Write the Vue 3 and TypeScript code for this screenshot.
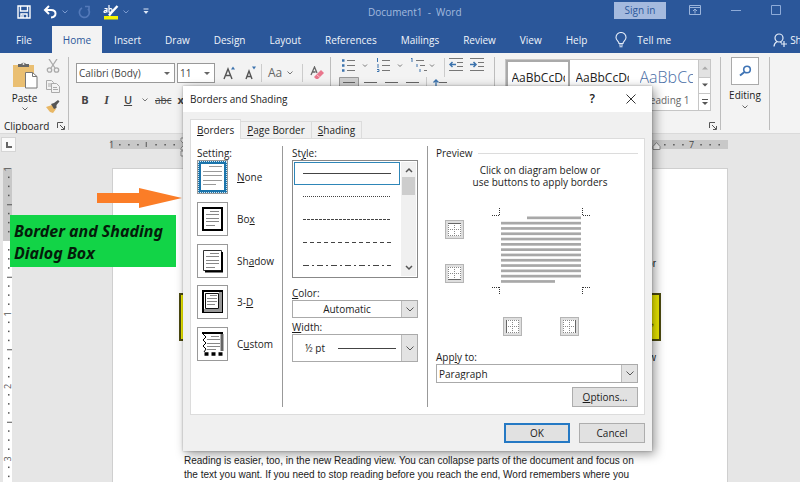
<script setup lang="ts">
import { ref } from 'vue'

interface Choice {
  id: string
  before: string
  key: string
  after: string
}

const menuTabs: string[] = ['File', 'Home', 'Insert', 'Draw', 'Design', 'Layout', 'References', 'Mailings', 'Review', 'View', 'Help']
const activeMenu = ref('Home')

const dialogTabs: Choice[] = [
  { id: 'borders', before: '', key: 'B', after: 'orders' },
  { id: 'page', before: '', key: 'P', after: 'age Border' },
  { id: 'shading', before: '', key: 'S', after: 'hading' },
]
const activeTab = ref('borders')

const settings: Choice[] = [
  { id: 'none', before: '', key: 'N', after: 'one' },
  { id: 'box', before: 'Bo', key: 'x', after: '' },
  { id: 'shadow', before: 'Sh', key: 'a', after: 'dow' },
  { id: 'threed', before: '3-', key: 'D', after: '' },
  { id: 'custom', before: 'C', key: 'u', after: 'stom' },
]
const setting = ref('none')

const lineStyles: { id: string; dash: string }[] = [
  { id: 'Solid', dash: 'none' },
  { id: 'Dotted', dash: '1 1' },
  { id: 'Short dash', dash: '3 1' },
  { id: 'Dash', dash: '4 3' },
  { id: 'Dash dot', dash: '6 3 2 3' },
]
const lineStyle = ref('Solid')

const previewLines: { x: number; y: number; w: number }[] = Array.from({ length: 13 }, (_, i) => ({
  x: i === 0 ? 36 : 10,
  y: 9.5 + i * 5.3,
  w: i === 0 ? 54 : i === 12 ? 54 : 80,
}))

const inch = 72.5
const eighths = (from: number, to: number) => {
  const marks: { n: number; pos: number; half: boolean; whole: boolean }[] = []
  for (let n = from; n <= to; n++) {
    marks.push({ n, pos: (n * inch) / 8, half: Math.abs(n % 8) === 4, whole: n % 8 === 0 })
  }
  return marks
}
const verticalMarks = eighths(-8, 28)
const leftMarks = eighths(0, 7)
const rightMarks = eighths(1, 7)
</script>

<template>
  <div class="word">
    <header class="titlebar">
      <div class="quick">
        <button aria-label="Save" class="q-save">
          <svg width="14" height="14" viewBox="0 0 14 14" fill="none" stroke="#fff" stroke-width="1.4"><path d="M1 1h12v12H1zM3.500 1v5h7V1M4 13V9h6v4M6 10v3" /></svg>
        </button>
        <button aria-label="Undo" class="q-undo">
          <svg width="15" height="14" viewBox="0 0 15 14" fill="none" stroke="#fff" stroke-width="2"><path d="M6 1L2 5l4 4M2 5h6c6 0 6 7 0 7.500" /></svg>
        </button>
        <button aria-label="Undo list" class="q-caret"><svg width="6" height="4" viewBox="0 0 6 4"><path d="M.5.5L3 3 5.500.5" fill="none" stroke="#7c9bd0" /></svg></button>
        <button aria-label="Redo" class="q-redo">
          <svg width="13" height="14" viewBox="0 0 13 14" fill="none" stroke="#5379b9" stroke-width="1.7"><path d="M4 3a5 5 0 1 0 6 1M7 1.500h4v4" /></svg>
        </button>
        <button aria-label="Text highlight" class="q-high">
          <svg width="16" height="16" viewBox="0 0 16 16"><rect x="1" y="12" width="14" height="3.500" fill="#f4f400" /><path d="M1.500 4.500h2.500v4M4 6.500C1 6 0 8.500 2 8.500c1 0 2-1 2-2M6 1v7.500M6 5.500c1-1.500 3.500-1 3 1-.3 2-2.500 2.500-3 1" stroke="#fff" stroke-width="1.200" fill="none" /><path d="M14.500 2L8 9l-2 2.500" stroke="#fff" stroke-width="2.400" fill="none" /></svg>
        </button>
        <button aria-label="Highlight colours" class="q-caret"><svg width="6" height="4" viewBox="0 0 6 4"><path d="M.5.5L3 3 5.500.5" fill="none" stroke="#7c9bd0" /></svg></button>
        <button aria-label="Customize toolbar" class="q-more"><svg width="6" height="7" viewBox="0 0 6 7"><path d="M.5 1h5" stroke="#dfe8f6" /><path d="M.5 3h5L3 6z" fill="#dfe8f6" /></svg></button>
      </div>
      <div class="doc-title">Document1&nbsp; -&nbsp; Word</div>
      <div class="window-tools">
        <button class="signin">Sign in</button>
        <button aria-label="Ribbon options"><svg width="12" height="10" viewBox="0 0 12 10" fill="none" stroke="#9cb5dc"><path d="M.5.5h11v9H.5zM.5 2.500h11M6 8.500v-4M4 6l2-2 2 2" /></svg></button>
        <button aria-label="Minimize"><svg width="10" height="10" viewBox="0 0 10 10"><path d="M0 5.500h10" stroke="#8eabd8" /></svg></button>
        <button aria-label="Maximize"><svg width="10" height="10" viewBox="0 0 10 10"><path d="M.5.5h9v9h-9z" fill="none" stroke="#8eabd8" /></svg></button>
      </div>
    </header>

    <nav class="menubar">
      <button v-for="tab in menuTabs" :key="tab" class="menu" :class="{ active: tab === activeMenu }" @click="activeMenu = tab">{{ tab }}</button>
      <button class="tell">
        <svg width="12" height="16" viewBox="0 0 12 16" fill="none" stroke="#e4ecf8" stroke-width="1.100"><path d="M4 11.500C4 9 1 8.500 1 5.500a5 5 0 0 1 10 0C11 8.500 8 9 8 11.500zM4 13h4M4.500 14.800h3" /></svg>
        Tell me
      </button>
      <button class="share">
        <svg width="14" height="14" viewBox="0 0 14 14" fill="none" stroke="#e4ecf8" stroke-width="1.200"><circle cx="6" cy="5" r="4" /><path d="M1 13.500C1 11 2.500 9.500 4 8.500M7.500 9l1 1M11 8v6M8 11h6" /></svg>
        Share
      </button>
    </nav>

    <section class="ribbon">
      <div class="group clipboard">
        <div class="clip-body">
          <button class="paste">
            <svg width="26" height="28" viewBox="0 0 26 28"><path d="M1 4h21v22H1z" fill="#eabf72" /><path d="M6 6V3h3a3 3 0 0 1 5 0h3v3z" fill="#666" /><circle cx="11.500" cy="3" r="1" fill="#eee" /><path d="M13.500 11.500h7l4.500 4v11.500H13.500z" fill="#fff" stroke="#777" /><path d="M20.500 11.500v4H25" fill="none" stroke="#777" /></svg>
            <span>Paste</span>
            <svg width="6" height="4" viewBox="0 0 6 4"><path d="M.5.5L3 3 5.500.5" fill="none" stroke="#666" /></svg>
          </button>
          <div class="clip-tools">
            <button aria-label="Cut"><svg width="14" height="14" viewBox="0 0 14 14" fill="none" stroke="#aaa" stroke-width="1.300"><path d="M3 0l6 9M11 0L5 9" /><circle cx="3.500" cy="11" r="2.200" /><circle cx="10.500" cy="11" r="2.200" /></svg></button>
            <button aria-label="Copy"><svg width="14" height="13" viewBox="0 0 14 13" fill="#f3f3f3" stroke="#aaa"><path d="M.5.5h5l2 2v7h-7zM2 4h4M2 6h4" /><path d="M5.500 3.500h5l3 3v6h-8zM7 7.500h4M7 9.500h5" /></svg></button>
            <button aria-label="Format painter"><svg width="15" height="14" viewBox="0 0 15 14"><path d="M1 7l6-2 4 4-3 4-3-1z" fill="#e8b765" /><path d="M6 4l3-1 4-3 1.500 1.500-3 3.500v3L9 9z" fill="#555" /></svg></button>
          </div>
        </div>
        <div class="group-label">Clipboard<svg width="8" height="8" viewBox="0 0 8 8" fill="none" stroke="#555"><path d="M.5 6V.5H6M3 3l4 4M7.500 4v3.500H4" /></svg></div>
      </div>

      <div class="group font">
        <div class="font-row">
          <span class="combo name"><select aria-label="Font name"><option>Calibri (Body)</option></select><i></i></span>
          <span class="combo size"><select aria-label="Font size"><option>11</option></select><i></i></span>
          <button aria-label="Grow font" class="grow"><svg width="13" height="16" viewBox="0 0 13 16"><path d="M1 14L5 4l4 10M2.500 10.500h5" stroke="#555" stroke-width="1.400" fill="none" /><path d="M8 4.500l2-3 2 3z" fill="#3c73ad" /></svg></button>
          <button aria-label="Shrink font" class="shrink"><svg width="13" height="16" viewBox="0 0 13 16"><path d="M2 14l3-8 3 8M3 11.500h4" stroke="#555" stroke-width="1.400" fill="none" /><path d="M8 1.500h4l-2 3z" fill="#3c73ad" /></svg></button>
          <button class="case">Aa <svg width="6" height="4" viewBox="0 0 6 4"><path d="M.5.5L3 3 5.500.5" fill="none" stroke="#777" /></svg></button>
          <button aria-label="Clear formatting" class="clear"><svg width="15" height="15" viewBox="0 0 15 15"><path d="M1 9l3.500-8L7 7M2.500 6h3" stroke="#666" stroke-width="1.300" fill="none" /><path d="M4 11l7-7 3 3-6 6H6z" fill="#e9778d" /><path d="M6.500 8.500l3.500 3" stroke="#f8c5cd" /></svg></button>
        </div>
        <div class="format-row">
          <button class="b">B</button><button class="i">I</button><button class="u">U</button>
          <button aria-label="Underline styles"><svg width="6" height="4" viewBox="0 0 6 4"><path d="M.5.5L3 3 5.500.5" fill="none" stroke="#777" /></svg></button>
          <button class="s">abc</button><button class="x">x</button>
        </div>
      </div>

      <div class="group paragraph">
        <div class="para-row">
          <svg class="lists" width="94" height="15" viewBox="0 0 94 15" fill="none" stroke="#777">
            <path d="M6 2.500h8M6 7.500h8M6 12.500h8M41 2.500h8M41 7.500h8M41 12.500h8M75 2.500h8M79 7.500h5M83 12.500h3" />
            <path d="M1 2.500h2.500M1 7.500h2.500M1 12.500h2.500" stroke="#3c73ad" stroke-width="2.500" />
            <path d="M36.500 0v4M36 7h2M36 9h2M36 11.500h2v2h-2M70 1l1-1v4M76 6v3M79 11v3" stroke="#3c73ad" />
            <path d="M22 6.500l2 2 2-2M57 6.500l2 2 2-2M89 6.500l2 2 2-2" />
          </svg>
          <svg class="indents" width="36" height="13" viewBox="0 0 36 13" fill="none" stroke="#777">
            <path d="M0 .5h14M8 4.500h6M8 8.500h6M0 12.500h14M21 .5h14M29 4.500h6M29 8.500h6M21 12.500h14" />
            <path d="M7 6.500H1M3.500 4L1 6.500 3.500 9M21 6.500h6M24.500 4L27 6.500 24.500 9" stroke="#3c73ad" stroke-width="1.500" />
          </svg>
          <span class="divider"></span>
        </div>
        <div class="align-row">
          <svg width="110" height="20" viewBox="0 0 110 20" fill="none" stroke="#666">
            <path d="M.5.500h19v19H.5z" fill="#cfcfcf" stroke="#999" />
            <path d="M4 5.500h12M4 9.500h8M25 5.500h13M28 9.500h8M46 5.500h13M50 9.500h9M67 5.500h13M67 9.500h13M100 5.500h8M100 9.500h8" />
            <path d="M87.500 0v20" stroke="#ccc" />
            <path d="M97 10V3M94.500 5.500L97 3l2.500 2.500" stroke="#3c73ad" stroke-width="1.300" />
          </svg>
        </div>
      </div>

      <div class="group styles">
        <div class="gallery">
          <button class="sample selected"><span>AaBbCcDc</span></button>
          <button class="sample"><span>AaBbCcDc</span></button>
          <button class="sample heading"><span>AaBbCc</span><small>Heading 1</small></button>
          <div class="gallery-nav">
            <button aria-label="Previous styles" class="off"><svg width="6" height="4" viewBox="0 0 6 4"><path d="M0 3.500L3 .5l3 3z" fill="#aaa" /></svg></button>
            <button aria-label="Next styles"><svg width="6" height="4" viewBox="0 0 6 4"><path d="M0 .5h6l-3 3z" fill="#555" /></svg></button>
            <button aria-label="More styles"><svg width="6" height="7" viewBox="0 0 6 7"><path d="M0 .5h6" stroke="#555" /><path d="M0 3h6L3 6z" fill="#555" /></svg></button>
          </div>
        </div>
        <svg class="launcher" width="8" height="8" viewBox="0 0 8 8" fill="none" stroke="#555"><path d="M.5 6V.5H6M3 3l4 4M7.500 4v3.500H4" /></svg>
      </div>

      <div class="group editing">
        <button class="edit-button">
          <span class="lens"><svg width="13" height="12" viewBox="0 0 13 12" fill="none" stroke="#3f74b5" stroke-width="1.600"><circle cx="8" cy="4.500" r="3.300" /><path d="M5.500 7L1 10.500" stroke-width="2" /></svg></span>
          Editing
          <svg width="6" height="4" viewBox="0 0 6 4"><path d="M.5.5L3 3 5.500.5" fill="none" stroke="#666" /></svg>
        </button>
      </div>
    </section>

    <main class="workspace">
      <div class="ruler-row">
        <button aria-label="Tab stop" class="tabstop"><svg width="6" height="6" viewBox="0 0 6 6"><path d="M1 0v5h5" fill="none" stroke="#666" stroke-width="2" /></svg></button>
        <div class="ruler">
          <svg width="73" height="9" viewBox="0 0 73 9">
            <template v-for="m in leftMarks" :key="m.n">
              <text v-if="m.whole" x="-1" y="8" font-size="9" fill="#444">1</text>
              <path v-else-if="m.half" :d="`M${m.pos} 2v5`" stroke="#555" />
              <rect v-else :x="m.pos" y="4" width="1.500" height="1.500" fill="#555" />
            </template>
          </svg>
          <svg width="72" height="9" viewBox="0 0 72 9">
            <template v-for="m in rightMarks" :key="m.n">
              <text v-if="m.half" x="33" y="8" font-size="9" fill="#444">7</text>
              <rect v-else :x="m.pos - 1" y="4" width="1.500" height="1.500" fill="#555" />
            </template>
          </svg>
        </div>
        <svg class="indent-start" width="8" height="20" viewBox="0 0 8 20" fill="#f8f8f8" stroke="#888"><path d="M1 1h6v3L4 7 1 4zM4 8l3 3v2H1v-2zM1 14h6v5H1z" /></svg>
        <svg class="indent-end" width="9" height="8" viewBox="0 0 9 8" fill="#f8f8f8" stroke="#888"><path d="M4.500.5l3.500 4v3H1v-3z" /></svg>
      </div>
      <div class="canvas">
        <svg class="vruler" width="9" height="314" viewBox="0 -73 9 314">
          <rect x="0" y="-73" width="9" height="73" fill="#c8c8c8" /><rect x="0" y="0" width="9" height="314" fill="#fff" />
          <template v-for="m in verticalMarks" :key="m.n">
            <text v-if="m.whole && m.n !== 0" :transform="`translate(8 ${m.pos + 3}) rotate(-90)`" font-size="9" fill="#555">{{ Math.abs(m.n / 8) }}</text>
            <path v-else-if="m.half" :d="`M4 ${m.pos}h5`" stroke="#555" />
            <rect v-else-if="!m.whole" x="5" :y="m.pos - 1" width="1.500" height="1.500" fill="#555" />
          </template>
        </svg>
        <article class="page">
          <p class="tail first">or</p>
          <p class="tail marked">,</p>
          <p class="tail">w</p>
          <p class="reading">Reading is easier, too, in the new Reading view. You can collapse parts of the document and focus on<br />the text you want. If you need to stop reading before you reach the end, Word remembers where you</p>
        </article>
      </div>
    </main>

    <svg class="arrow" width="86" height="22" viewBox="0 0 86 22"><path d="M0 6h42V1l43 10-43 10v-5H0z" fill="#fb7d27" /></svg>
    <aside class="callout">Border and Shading<br />Dialog Box</aside>

    <section class="dialog" role="dialog" aria-labelledby="dialog-title">
      <header class="dialog-head">
        <h1 id="dialog-title">Borders and Shading</h1>
        <button aria-label="Help" class="help">?</button>
        <button aria-label="Close"><svg width="10" height="10" viewBox="0 0 10 10"><path d="M.5.5l9 9M9.500.5l-9 9" stroke="#333" fill="none" /></svg></button>
      </header>
      <div class="dialog-body">
        <div class="dtabs" role="tablist">
          <button v-for="t in dialogTabs" :key="t.id" role="tab" class="dtab" :class="{ active: t.id === activeTab }" :aria-selected="t.id === activeTab" @click="activeTab = t.id"><u>{{ t.key }}</u>{{ t.after }}</button>
        </div>
        <div class="panel">
          <div class="settings" role="radiogroup" aria-labelledby="setting-label">
            <div id="setting-label" class="label">Setting:</div>
            <div class="setting-list">
              <label v-for="s in settings" :key="s.id" class="setting">
                <input v-model="setting" type="radio" name="setting" :value="s.id" />
                <span class="thumb">
                  <svg width="31" height="34" viewBox="0 0 31 34" fill="none">
                    <g v-if="s.id === setting">
                      <rect x="2.500" y="2.500" width="26" height="29" stroke="#1b74ab" stroke-width="3" />
                      <path d="M1 1.500h29M1 32.500h29M1.500 2v30M29.500 2v30" stroke="#d5eaf6" stroke-dasharray="1 1" />
                    </g>
                    <rect v-if="s.id === 'box'" x="6" y="6" width="19" height="22" stroke="#000" stroke-width="2" />
                    <g v-if="s.id === 'shadow'"><path d="M6.500 6.500h18v20h-18z" stroke="#333" /><path d="M25 8v19.500H8" stroke="#000" stroke-width="2" /></g>
                    <g v-if="s.id === 'threed'"><path d="M5 5h21v23H5z" fill="#000" /><path d="M7 7h18v20H7z" fill="#999" /><path d="M7 7h15v17H7z" fill="#fff" /><path d="M8.500 8.500h13v15h-13z" stroke="#111" /></g>
                    <g v-if="s.id === 'custom'"><path d="M5 6h21" stroke="#000" stroke-width="2" /><path d="M25 7v17" stroke="#666" stroke-width="3" /><path d="M6 7l3 3-3 3 3 3-3 3 3 3-2 3" stroke="#000" /><path d="M7.500 27h4M14.500 27h4M21.500 27h4" stroke="#000" stroke-width="3.500" /></g>
                    <path v-if="s.id === 'none'" d="M12 6.500h13M6 11.500h19M6 15.500h19M6 20.500h19M6 24.500h13" stroke="#999" />
                    <path v-else-if="s.id === 'threed'" d="M13 10.500h7M10 13.500h10M10 16.500h10M10 19.500h8" stroke="#888" />
                    <path v-else-if="s.id === 'custom'" d="M14 9.500h8M10 12.500h13M10 16.500h13M10 19.500h13M10 22.500h9" stroke="#888" />
                    <path v-else d="M13 9.500h9M9 12.500h13M9 16.500h13M9 19.500h13M9 23.500h9" stroke="#888" />
                  </svg>
                </span>
                <span>{{ s.before }}<u>{{ s.key }}</u>{{ s.after }}</span>
              </label>
            </div>
          </div>

          <div class="line-options">
            <div id="style-label" class="label">St<u>y</u>le:</div>
            <div class="listbox">
              <ul role="listbox" aria-labelledby="style-label">
                <li v-for="l in lineStyles" :key="l.id" role="option" :aria-label="l.id" :aria-selected="l.id === lineStyle" :class="{ chosen: l.id === lineStyle }" @click="lineStyle = l.id">
                  <svg width="88" height="1" viewBox="0 0 88 1"><path d="M0 .5h88" stroke="#444" :stroke-dasharray="l.dash" /></svg>
                </li>
              </ul>
              <div class="scroll">
                <svg width="8" height="6" viewBox="0 0 8 6"><path d="M1 5l3-3 3 3" fill="none" stroke="#555" stroke-width="1.500" /></svg>
                <div class="scroll-thumb"></div>
                <svg class="down" width="8" height="6" viewBox="0 0 8 6"><path d="M1 1l3 3 3-3" fill="none" stroke="#555" stroke-width="1.500" /></svg>
              </div>
            </div>
            <label class="label" for="color"><u>C</u>olor:</label>
            <div class="picker color">
              <select id="color"><option>Automatic</option></select>
              <span class="drop"><svg width="8" height="5" viewBox="0 0 8 5"><path d="M.5.5L4 4 7.500.5" fill="none" stroke="#555" /></svg></span>
            </div>
            <label class="label" for="width"><u>W</u>idth:</label>
            <div class="picker width">
              <select id="width"><option>½ pt</option></select>
              <span class="weight"></span>
              <span class="drop"><svg width="8" height="5" viewBox="0 0 8 5"><path d="M.5.5L4 4 7.500.5" fill="none" stroke="#555" /></svg></span>
            </div>
          </div>

          <div class="preview">
            <div class="preview-head">Preview</div>
            <p>Click on diagram below or<br />use buttons to apply borders</p>
            <div class="diagram">
              <div class="side">
                <button aria-label="Top border"><svg width="13" height="13" viewBox="0 0 13 13"><path d="M0 0h13v13H0z" fill="#fff" /><path d="M.5 0v13M12.500 0v13M6.500 0v13M0 6.500h13M0 12.500h13" stroke="#888" stroke-dasharray="1 1" /><path d="M0 .5h13" stroke="#666" /></svg></button>
                <button aria-label="Bottom border"><svg width="13" height="13" viewBox="0 0 13 13"><path d="M0 0h13v13H0z" fill="#fff" /><path d="M.5 0v13M12.500 0v13M6.500 0v13M0 6.500h13M0 .5h13" stroke="#888" stroke-dasharray="1 1" /><path d="M0 12.500h13" stroke="#666" /></svg></button>
              </div>
              <svg width="100" height="90" viewBox="0 0 100 90">
                <rect v-for="(r, i) in previewLines" :key="i" :x="r.x" :y="r.y" :width="r.w" height="2.700" fill="#a8a8a8" />
                <path d="M1 8.500h8M8.500 1v8M99 8.500h-8M91.500 1v8M1 80.500h8M8.500 80v8M99 80.500h-8M91.500 80v8" fill="none" stroke="#333" stroke-dasharray="1 1" />
              </svg>
              <div class="below">
                <button aria-label="Left border"><svg width="13" height="13" viewBox="0 0 13 13"><path d="M0 0h13v13H0z" fill="#fff" /><path d="M12.500 0v13M6.500 0v13M0 6.500h13M0 .5h13M0 12.500h13" stroke="#888" stroke-dasharray="1 1" /><path d="M.5 0v13" stroke="#666" /></svg></button>
                <button aria-label="Right border"><svg width="13" height="13" viewBox="0 0 13 13"><path d="M0 0h13v13H0z" fill="#fff" /><path d="M.5 0v13M6.500 0v13M0 6.500h13M0 .5h13M0 12.500h13" stroke="#888" stroke-dasharray="1 1" /><path d="M12.500 0v13" stroke="#666" /></svg></button>
              </div>
            </div>
            <label class="label" for="apply">App<u>l</u>y to:</label>
            <div class="picker apply">
              <select id="apply"><option>Paragraph</option></select>
              <span class="drop"><svg width="8" height="5" viewBox="0 0 8 5"><path d="M.5.5L4 4 7.500.5" fill="none" stroke="#555" /></svg></span>
            </div>
            <button class="push options"><u>O</u>ptions...</button>
          </div>
        </div>
        <footer class="actions">
          <button class="push ok">OK</button>
          <button class="push">Cancel</button>
        </footer>
      </div>
    </section>
  </div>
</template>

<style>
body { margin: 0; }
</style>

<style scoped>
.word { position: relative; min-height: 100vh; display: flex; flex-direction: column; overflow: hidden; background: #e6e6e6; color: #222; font: 10px/12px "Open Sans", "Noto Sans", sans-serif; }
.word * { box-sizing: border-box; }
button, select { font: inherit; color: inherit; border: 0; background: none; padding: 0; margin: 0; border-radius: 0; }
button { display: flex; align-items: center; justify-content: center; white-space: nowrap; flex: none; }
svg { display: block; flex: none; }
p, h1, ul { margin: 0; padding: 0; }
select { appearance: none; outline: 0; width: 100%; height: 100%; }
u { text-underline-offset: 1px; }

.titlebar { display: grid; grid-template-columns: 368px 1fr auto; height: 26px; background: #2b579a; }
.quick { display: flex; align-items: center; height: 23px; padding-left: 17px; }
.q-undo { margin-left: 12px; }
.q-caret { margin-left: 4px; }
.q-redo { margin-left: 10px; }
.q-high { margin-left: 12px; }
.q-more { margin-left: 14px; }
.doc-title { color: #a3bade; line-height: 24px; }
.window-tools { display: flex; align-items: center; height: 20px; padding-right: 19px; gap: 30px; }
.signin { width: 52px; height: 17px; margin-right: -7px; background: #a5bade; color: #2b579a; }

.menubar { display: flex; height: 27px; background: #2b579a; color: #f1f5fb; overflow: hidden; }
.menu { padding: 0 12px; }
.menu:first-child { padding: 0 20px 0 16px; }
.menu.active { background: #f3f3f3; color: #2b579a; padding: 0 11px; }
.tell { gap: 10px; padding-left: 16px; }
.share { gap: 3px; margin-left: auto; margin-right: -17px; }

.ribbon { display: flex; height: 81px; background: #f3f3f3; border-bottom: 1px solid #dadada; padding-top: 4px; }
.group { height: 73px; border-right: 1px solid #bdbdbd; flex: none; }
.clipboard { width: 69px; display: flex; flex-direction: column; justify-content: space-between; }
.clip-body { display: flex; gap: 7px; padding: 2px 0 0 11px; }
.paste { flex-direction: column; gap: 3px; width: 27px; height: 54px; }
.clip-tools { display: flex; flex-direction: column; gap: 7px; }
.group-label { display: flex; justify-content: space-between; align-items: center; padding: 0 3px 0 4px; line-height: 8px; }
.font { width: 262px; }
.font-row { display: flex; align-items: center; height: 20px; margin: 6px 0 0 7px; color: #444; }
.combo { display: flex; align-items: center; height: 20px; background: #fff; border: 1px solid #999; padding: 0 4px 0 2px; }
.combo i { flex: none; border: 3px solid transparent; border-top-color: #666; border-bottom: 0; }
.name { width: 99px; }
.size { width: 38px; margin-left: 2px; }
.grow { margin-left: 8px; }
.shrink { margin-left: 8px; }
.case { gap: 5px; font-size: 12px; border: solid #ccc; border-width: 0 1px; height: 18px; padding: 0 9px 0 6px; margin-left: 4px; color: #666; }
.clear { margin-left: 7px; }
.format-row { display: flex; align-items: center; height: 16px; margin: 9px 0 0 12px; font-size: 11px; color: #444; }
.b { font-weight: 700; width: 8px; }
.i { font-style: italic; font-family: "Liberation Serif", serif; font-weight: 700; width: 35px; font-size: 12px; }
.u { text-decoration: underline; font-weight: 600; width: 8px; margin-right: 10px; }
.s { text-decoration: line-through; margin-left: 7px; font-size: 10px; }
.x { margin-left: 6px; font-weight: 700; }
.paragraph { width: 164px; display: flex; flex-direction: column; gap: 4px; padding: 1px 0 0 8px; }
.para-row { display: flex; gap: 14px; padding-left: 2px; height: 15px; position: relative; }
.divider { position: absolute; left: 105px; top: 0; height: 19px; border-left: 1px solid #ccc; }
.styles { width: 226px; display: flex; flex-direction: column; justify-content: space-between; padding: 2px 9px 0 10px; }
.gallery { display: flex; height: 52px; border: 1px solid #c6c6c6; background: #fff; color: #222; }
.sample { width: 64px; flex-direction: column; justify-content: flex-start; font-size: 12px; padding: 0 4px; overflow: hidden; }
.sample span { line-height: 35px; width: 53px; overflow: hidden; text-align: left; }
.sample.selected { border: 2px solid #aaa; padding: 0; }
.sample.selected span { line-height: 31px; }
.heading span { font-size: 16px; font-weight: 300; color: #4a6ea6; }
.heading small { font-size: 10px; color: #666; line-height: 10px; }
.gallery-nav { margin-left: auto; width: 13px; display: grid; grid-template-rows: repeat(3, 1fr); border-left: 1px solid #c6c6c6; }
.gallery-nav button + button { border-top: 1px solid #c6c6c6; }
.off { background: #e2e2e2; }
.launcher { align-self: flex-end; margin-right: -6px; }
.editing { width: 49px; padding-left: 10px; }
.edit-button { flex-direction: column; width: 28px; gap: 4px; }
.lens { display: grid; place-items: center; width: 28px; height: 28px; border: 1px solid #aaa; background: #fff; }

.workspace { flex: 1; display: flex; flex-direction: column; }
.ruler-row { display: flex; align-items: flex-start; height: 34px; padding: 3px 72px 0 1px; position: relative; }
.tabstop { width: 15px; height: 15px; background: #fafafa; border: 1px solid #d5d5d5; }
.ruler { flex: 1; display: flex; justify-content: space-between; margin: 3px 0 0 94px; background: #c8c8c8; }
.ruler svg { overflow: visible; }
.indent-start { position: absolute; left: 180px; top: 3px; }
.indent-end { position: absolute; right: 139px; top: 8px; }
.canvas { flex: 1; display: flex; padding: 0 72px 0 3px; }
.vruler { align-self: flex-start; }
.page { flex: 1; min-width: 0; margin-left: 100px; padding: 0 71px; background: #fff; border: 1px solid #cfcfcf; border-bottom: 0; font: 10px/14px "Liberation Sans", Arial, sans-serif; color: #222; }
.tail { text-align: right; }
.first { padding-top: 88px; }
.marked { margin: 22px -5px 10px; padding: 20px 5px 10px; background: #f1ee00; border: 2px solid #4c4a10; }
.reading { padding-top: 89px; white-space: nowrap; }

.arrow { position: absolute; left: 97px; top: 187px; }
.callout { position: absolute; left: 10px; top: 215px; width: 166px; height: 52px; padding: 5px 4px; background: #12d447; color: #041c0a; font: italic 700 16px/22px "Noto Sans", "Open Sans", sans-serif; white-space: nowrap; }

.dialog { position: absolute; left: 183px; top: 86px; width: 469px; display: flex; flex-direction: column; background: #f0f0f0; color: #1c1c1c; box-shadow: 3px 3px 10px rgba(0, 0, 0, .4), 0 0 2px rgba(0, 0, 0, .3); }
.dialog-head { display: flex; align-items: center; gap: 31px; height: 26px; padding: 0 16px 0 7px; background: #fff; }
.dialog-head h1 { flex: 1; font-size: 10px; font-weight: 400; }
.help { font-size: 12px; font-weight: 600; }
.dialog-body { padding: 7px 7px 8px; }
.dtabs { display: flex; align-items: flex-end; height: 19px; }
.dtab { height: 17px; padding: 0 6px; border: 1px solid #dcdcdc; border-left-width: 0; border-bottom: 0; }
.dtab.active { height: 20px; margin-bottom: -1px; background: #fff; border-left-width: 1px; padding: 0 6px; position: relative; }
.panel { display: flex; height: 277px; padding: 7px 6px; background: #fff; border: 1px solid #dcdcdc; }
.label { display: block; line-height: 14px; }
.settings { width: 86px; border-right: 1px solid #999; }
.setting-list { display: flex; flex-direction: column; justify-content: space-between; height: 201px; }
.setting { display: flex; align-items: center; gap: 9px; position: relative; }
.setting input { position: absolute; opacity: 0; margin: 0; width: 31px; height: 34px; }
.thumb { outline: 1px solid #999; outline-offset: -1px; }
.line-options { width: 145px; padding: 0 9px; border-right: 1px solid #999; }
.listbox { display: flex; height: 118px; margin-bottom: 8px; padding: 1px; border: 1px solid #888; }
.listbox ul { flex: 1; list-style: none; }
.listbox li { display: grid; place-items: center; height: 23px; border: 1px solid transparent; }
.listbox li.chosen { border-color: #2e86b8; }
.scroll { width: 15px; background: #f0f0f0; display: flex; flex-direction: column; align-items: center; padding: 5px 0; margin-left: 1px; }
.scroll-thumb { width: 13px; height: 18px; margin-top: 4px; background: #cdcdcd; }
.down { margin-top: auto; }
.picker { display: flex; align-items: center; height: 18px; border: 1px solid #aaa; background: #fff; }
.picker select { flex: 1; width: auto; min-width: 0; }
.drop { display: grid; place-items: center; width: 16px; height: 100%; background: #e3e3e3; border-left: 1px solid #bbb; flex: none; }
.color { margin-bottom: 2px; }
.color select { text-align: center; text-align-last: center; }
.width { height: 28px; }
.width select { padding-left: 12px; }
.weight { width: 58px; margin-right: 5px; border-top: 1px solid #444; }
.preview { flex: 1; padding-left: 8px; display: flex; flex-direction: column; }
.preview-head { display: flex; align-items: center; gap: 5px; line-height: 14px; }
.preview-head::after { content: ""; flex: 1; border-top: 1px solid #dcdcdc; }
.preview p { text-align: center; margin-top: 4px; line-height: 12px; padding-left: 6px; }
.diagram { display: grid; grid-template-columns: 18px 100px; column-gap: 28px; row-gap: 20px; margin: 19px 0 14px 9px; }
.diagram button { width: 19px; height: 19px; background: #dedede; border: 1px solid #b5b5b5; }
.side { display: flex; flex-direction: column; gap: 25px; padding-top: 13px; }
.below { grid-column: 2; display: flex; gap: 38px; padding-left: 12px; }
.apply { height: 20px; }
.apply select { padding-left: 2px; }
.push { width: 66px; height: 20px; background: #e1e1e1; border: 1px solid #adadad; }
.options { align-self: flex-end; margin-top: 4px; }
.actions { display: flex; justify-content: flex-end; gap: 9px; padding-top: 8px; }
.ok { border: 2px solid #2579c4; }
</style>
